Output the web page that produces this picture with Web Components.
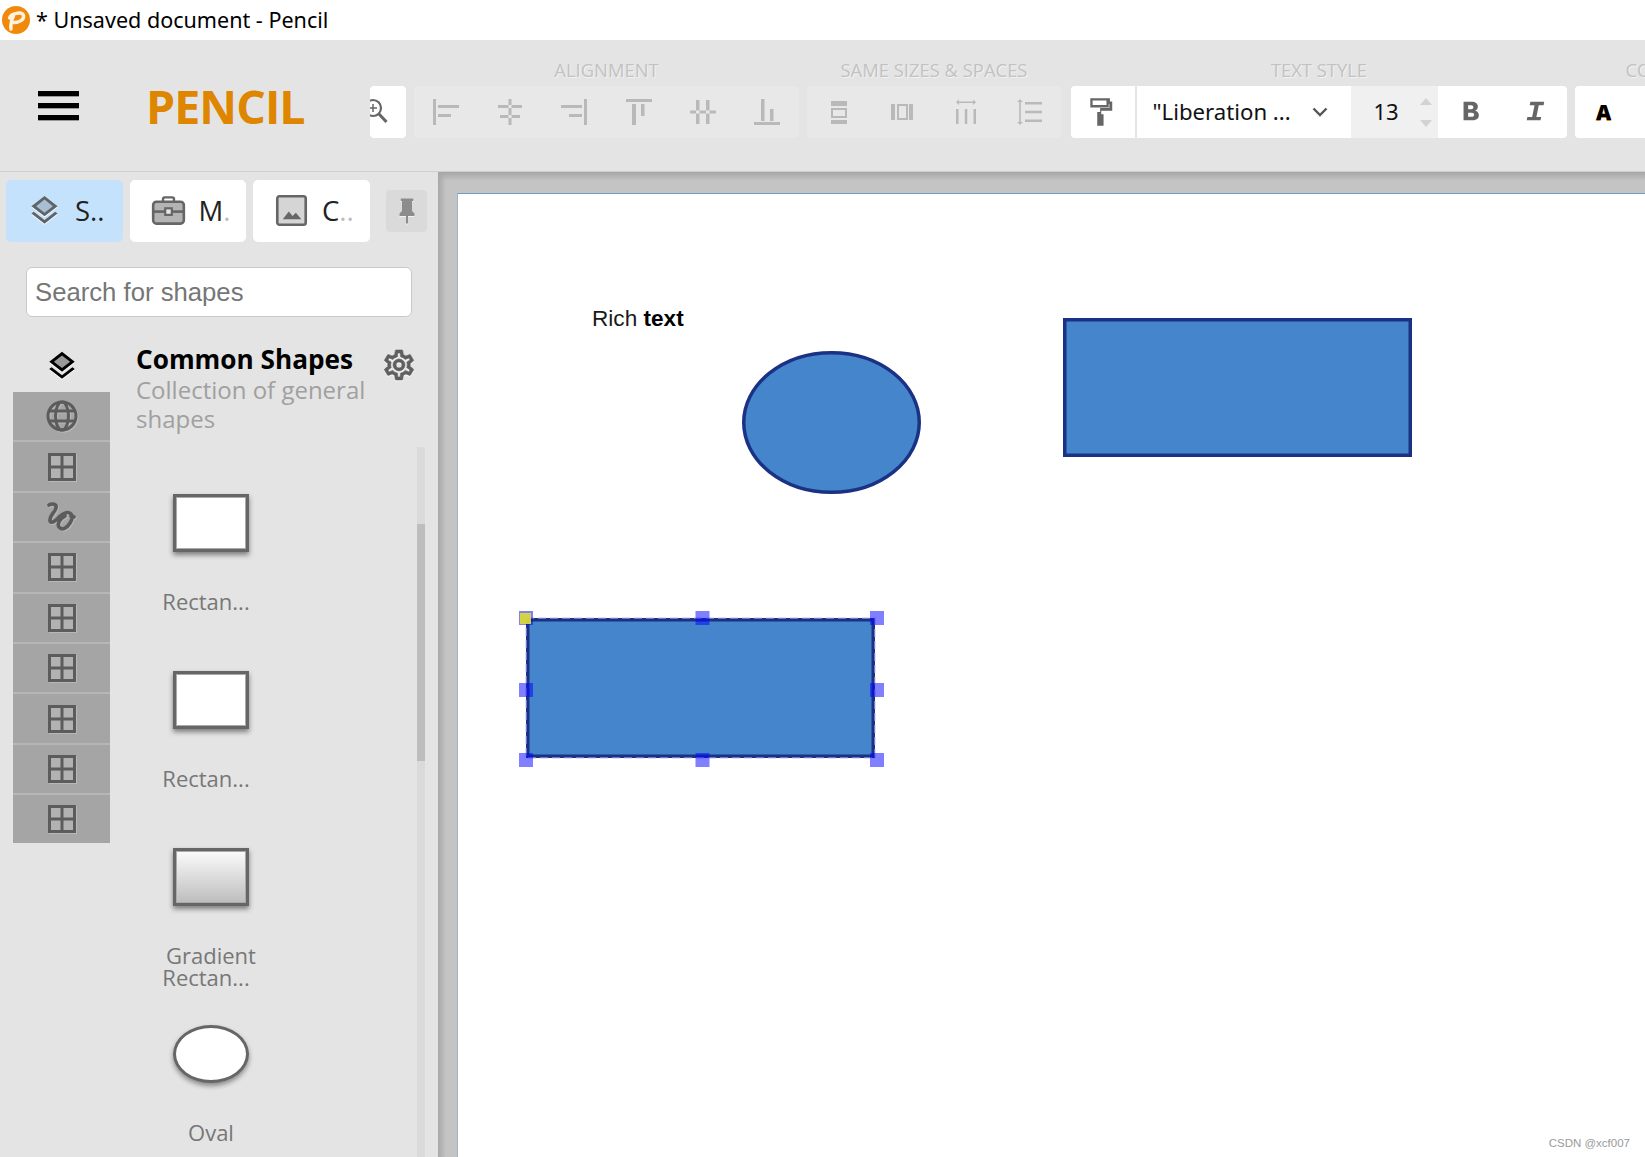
<!DOCTYPE html>
<html>
<head>
<meta charset="utf-8">
<title>Pencil</title>
<style>
    html,body{margin:0;padding:0;height:100%;overflow:hidden;background:#e4e4e4}
    body{font-family:"Open Sans","Noto Sans",sans-serif}
</style>
</head>
<body>
<pencil-app></pencil-app>

<script>
const ICONS = {
    alignLeft: 'M0 0h3v26H0zM5 6h21v3H5zM5 15h13v3H5z',
    alignCenter: 'M11.5 0h3v26h-3zM1 6h24v3H1zM3 16h20v3H3z',
    alignRight: 'M23 0h3v26h-3zM0 6h21v3H0zM8 15h13v3H8z',
    alignTop: 'M0 0h26v3H0zM6 5h4v21H6zM15 5h3.5v12H15z',
    alignMiddle: 'M0 11.5h26v3H0zM6 1h3.5v24H6zM16 1h3.5v24H16z',
    alignBottom: 'M0 23h26v3H0zM7 0h3.5v22H7zM16 10h3.5v12H16z',
    sameHeight: 'M5 2h16v5H5zM5 9h16v10H5zM7 11v6h12v-6zM5 21h16v4H5z',
    sameWidth: 'M2 5h4v16H2zM8 5h11v16H8zM10 7v12h7V7zM20 5h4v16h-4z',
    spaceH: 'M3 3.2 6 .5v2h14v-2l3 2.7-3 2.8v-2H6v2zM3 10h2.5v15H3zM11.8 10h2.5v15h-2.5zM20.5 10H23v15h-2.5z',
    spaceV: 'M4 0l2.8 3h-2v20h2L4 26l-2.800-3h2V3h-2zM9 3h17v2.5H9zM9 11.800h17v2.5H9zM9 20.500h17V23H9z',
    roller: 'M2 1h17v3h2v8h-9.5v3h2v10H8V13h2.5V9.5H18.5V6H18v3H2zM4 3v4h12V3z',
    bold: 'M6 2h9c3.800 0 6.500 1.800 6.500 5.300 0 2.100-1.100 3.600-2.900 4.300 2.500.6 4 2.400 4 5 0 3.900-3 5.400-7 5.400H6zM11 5.800v4.200h3.400c1.400 0 2.200-.8 2.200-2.100s-.8-2.100-2.200-2.100zM11 13.800v4.400h3.900c1.600 0 2.600-.8 2.600-2.200s-1-2.200-2.600-2.200z',
    italic: 'M8 2h15l-.7 3.700h-5.200L14.500 18.300h5.200L19 22H4l.7-3.700h5.200L12.500 5.700H7.300z'
}
const LAYERS = `<svg viewBox="0 0 24 24" width="100%" height="100%"><path d="M12 3.500 5 9l7 5.500L19 9z" fill="VAR"/><path fill="STROKE" d="M12,18.540L19.370,12.800L21,14.070L12,21.070L3,14.070L4.620,12.810L12,18.540M12,16L3,9L12,2L21,9L12,16M12,4.530L6.260,9L12,13.470L17.740,9L12,4.530Z"/></svg>`

class BaseElement extends HTMLElement{
    constructor(){
        super()
        this.attachShadow({mode: 'open'})
    }
    connectedCallback(){
        this.shadowRoot.innerHTML = `<style>${this.getStyles()}</style>${this.getTemplate()}`
    }
    getStyles(){ return '' }
    getTemplate(){ return '<slot></slot>' }
}

class TitleBar extends BaseElement{
    getStyles(){
        return `
            :host{display:flex;align-items:center;height:40px;background:#fff;padding-left:2px;box-sizing:border-box}
            svg{width:28px;height:28px;margin-right:6px;flex:none}
            span{font:21.55px/40px "Noto Sans",sans-serif;color:#000;white-space:nowrap}
        `
    }
    getTemplate(){
        return `
            <svg viewBox="0 0 28 28">
                <circle cx="14" cy="14" r="14" fill="#f08a0c"/>
                <path d="M9 23c-.5-4 .5-9 2.5-13M7.500 12C9 7.500 20 5 21.500 9.500 22.500 14 16 17 11 16.500" fill="none" stroke="#fff3e0" stroke-width="3.4" stroke-linecap="round"/>
            </svg>
            <span>* Unsaved document - Pencil</span>
        `
    }
}

class ToolGroup extends BaseElement{
    getStyles(){
        return `
            :host{display:flex;flex-direction:column;flex:none;padding-top:20px;box-sizing:border-box}
            .label{height:20px;line-height:20px;margin-bottom:6px;text-align:center;white-space:nowrap;
                font-size:18.4px;color:#c2c2c2;text-shadow:1px 1px 0 #f2f2f2}
            .box{display:flex;align-items:center;height:52px;border-radius:4px;background:var(--box-bg,#fff);overflow:hidden}
        `
    }
    getTemplate(){
        return `
            <div class="label">${this.getAttribute('label') || ''}</div>
            <div class="box"><slot></slot></div>
        `
    }
}

class ToolButton extends BaseElement{
    getStyles(){
        const size = this.getAttribute('size') || 26
        return `
            :host{display:flex;align-items:center;justify-content:center;height:100%;flex:1 1 0;color:var(--icon,#b9b9b9)}
            svg{width:${size}px;height:${size}px;fill:currentColor;fill-rule:evenodd;display:block}
        `
    }
    getTemplate(){
        return `<svg viewBox="0 0 26 26"><path d="${ICONS[this.getAttribute('icon')]}"/></svg>`
    }
}

class FontPicker extends BaseElement{
    getStyles(){
        return `
            :host{display:flex;height:100%;width:303px;flex:none;font-family:"Noto Sans",sans-serif;color:#111}
            .name{width:216px;box-sizing:border-box;padding:0 0 2px 16px;display:flex;align-items:center;font-size:22.2px;white-space:nowrap;border-left:2px solid #e4e4e4}
            .name svg{margin-left:21px;flex:none;margin-top:2px}
            .size{width:87px;background:#f0f0f0;display:flex;align-items:center;padding:0 0 2px 23px;box-sizing:border-box;font:22px "Noto Sans",sans-serif;gap:21px}
            .arrows{display:flex;flex-direction:column;gap:15px;margin-top:2px}
            .arrows i{display:block;width:0;height:0;border:6px solid transparent;border-top:0;border-bottom:7px solid #d2d2d2}
            .arrows i + i{transform:rotate(180deg)}
        `
    }
    getTemplate(){
        return `
            <div class="name">
                <span>"Liberation ...</span>
                <svg width="16" height="10" viewBox="0 0 16 10"><path d="M1.500 1.500 8 8l6.500-6.500" fill="none" stroke="#555" stroke-width="2.400"/></svg>
            </div>
            <div class="size"><span>13</span><div class="arrows"><i></i><i></i></div></div>
        `
    }
}

class AppToolbar extends BaseElement{
    getStyles(){
        return `
            :host{display:flex;height:132px;box-sizing:border-box;background:#e4e4e4;border-bottom:1px solid #cfcfcf;padding-left:38px;overflow:hidden}
            .burger{display:flex;flex-direction:column;gap:7px;width:41px;margin-top:51px;flex:none}
            .burger i{display:block;height:5px;background:#000;box-shadow:0 1px 0 #999}
            .logo{margin-left:67px;width:224px;flex:none;font:700 46.5px/1 "Open Sans",sans-serif;color:#de8600;letter-spacing:-.95px;padding-top:43px;box-sizing:border-box}
            .zoom{width:36px;margin-right:8px}
            .zoom svg{display:block;width:36px;height:52px}
            .a{width:385px;margin-right:8px;--box-bg:#e8e8e8}
            .b{width:254px;margin-right:10px;--box-bg:#e8e8e8}
            .c{width:496px;margin-right:8px;--icon:#666}
            .d{width:162px;--icon:#000}
            .wide{flex:0 0 63.5px}
        `
    }
    getTemplate(){
        const group = list => list.map(n => `<tool-button icon="${n}"></tool-button>`).join('')
        return `
            <div class="burger"><i></i><i></i><i></i></div>
            <div class="logo">PENCIL</div>
            <tool-group class="zoom">
                <svg viewBox="0 0 36 52">
                    <circle cx="3" cy="22" r="8" fill="none" stroke="#666" stroke-width="2.2"/>
                    <path d="M-1 22h8M3 18v8" stroke="#666" stroke-width="1.5"/>
                    <path d="M9 28l7.500 8" stroke="#666" stroke-width="3"/>
                </svg>
            </tool-group>
            <tool-group class="a" label="ALIGNMENT">${group(['alignLeft','alignCenter','alignRight','alignTop','alignMiddle','alignBottom'])}</tool-group>
            <tool-group class="b" label="SAME SIZES &amp; SPACES">${group(['sameHeight','sameWidth','spaceH','spaceV'])}</tool-group>
            <tool-group class="c" label="TEXT STYLE">
                <tool-button class="wide" icon="roller" size="30"></tool-button>
                <font-picker></font-picker>
                <tool-button icon="bold" size="24"></tool-button>
                <tool-button icon="italic" size="24"></tool-button>
            </tool-group>
            <tool-group class="d" label="COLOR">
                <side-letter>A</side-letter>
            </tool-group>
        `
    }
}

class SideLetter extends BaseElement{
    getStyles(){
        return `
            :host{display:block;padding-left:21px;font:800 21px "Open Sans",sans-serif;color:#000;text-shadow:0 1px 0 #d98b2b}
        `
    }
}

class SideTab extends BaseElement{
    getStyles(){
        return `
            :host{display:flex;align-items:center;width:116.5px;height:62px;border-radius:5px;background:#fff;box-sizing:border-box;flex:none;
                font:27.5px "Open Sans",sans-serif;color:#222}
            :host([active]){background:#c5e2fd}
            .ic{width:35px;height:35px;margin:0 13px 0 21px;flex:none;filter:drop-shadow(0 1px 0 #fff)}
            .fade{color:#bbb}
        `
    }
    getTemplate(){
        const kind = this.getAttribute('icon')
        const icon = kind === 'layers' ? LAYERS.replace('VAR','#a9bed2').replace('STROKE','#5f6468')
            : kind === 'case' ? `<svg viewBox="0 0 32 32" width="100%" height="100%"><path d="M11 8V5.500C11 4.700 11.700 4 12.500 4h7c.8 0 1.500.7 1.500 1.500V8" fill="none" stroke="#666" stroke-width="2.2"/><rect x="2" y="8" width="28" height="20" rx="3" fill="#b4b4b4" stroke="#666" stroke-width="2.4"/><path d="M2 17h28" stroke="#666" stroke-width="2.4"/><rect x="13" y="14" width="6" height="6" fill="#e8e8e8" stroke="#666" stroke-width="2"/></svg>`
            : `<svg viewBox="0 0 32 32" width="100%" height="100%"><rect x="3" y="3" width="26" height="26" rx="2" fill="#d5d5d5" stroke="#666" stroke-width="2.4"/><path d="M8 24l5.500-7 3.500 4 3-3 5 6z" fill="#666"/></svg>`
        return `<div class="ic">${icon}</div><span>${this.getAttribute('text')}<span class="fade">${this.getAttribute('tail') || ''}</span></span>`
    }
}

class SideTabs extends BaseElement{
    getStyles(){
        return `
            :host{display:flex;gap:7px;padding:7.5px 0 0 6px}
            .pin{width:41px;height:42px;margin:10px 0 0 9.5px;border-radius:4px;background:#dadada;display:flex;align-items:center;justify-content:center}
            .pin svg{width:30px;height:30px;fill:#8c8c8c;filter:drop-shadow(0 1px 0 #f2f2f2)}
        `
    }
    getTemplate(){
        return `
            <side-tab active icon="layers" text="S.."></side-tab>
            <side-tab icon="case" text="M" tail="."></side-tab>
            <side-tab icon="image" text="C" tail=".."></side-tab>
            <div class="pin"><svg viewBox="0 0 24 24"><path d="M16,12V4H17V2H7V4H8V12L6,14V16H11.2V22H12.8V16H18V14L16,12Z"/></svg></div>
        `
    }
}

class ShapeSearch extends BaseElement{
    getStyles(){
        return `
            :host{display:block;margin:25.5px 0 23px 26px;width:386px;height:50px;box-sizing:border-box;background:#fff;border:1px solid #c9c9c9;border-radius:6px;
                font:25.7px/48px "Liberation Sans",sans-serif;color:#767676;padding-left:8px}
        `
    }
    getTemplate(){ return 'Search for shapes' }
}

class RailItem extends BaseElement{
    getStyles(){
        return `
            :host{display:flex;align-items:center;justify-content:center;height:50.4px;box-sizing:border-box;background:#a5a5a5;border-bottom:2px solid #b6b6b6}
            :host([plain]){background:none;border:0;height:52px}
            :host(:last-child){border-bottom:0;height:48.3px}
            svg{display:block;filter:drop-shadow(1px 1px 0 #b8b8b8)}
            :host([plain]) svg{filter:drop-shadow(0 1px 0 #fff)}
        `
    }
    getTemplate(){
        const kind = this.getAttribute('icon')
        if(kind === 'layers'){
            return `<svg width="34" height="34" viewBox="0 0 24 24">${LAYERS.replace('VAR','#999').replace('STROKE','#000').replace(/<svg[^>]*>|<\/svg>/g,'')}</svg>`
        }
        if(kind === 'globe'){
            return `<svg width="32" height="32" viewBox="0 0 32 32" fill="none" stroke="#5c5c5c" stroke-width="3">
                <circle cx="16" cy="16" r="14"/><ellipse cx="16" cy="16" rx="6.5" ry="14"/><path d="M3.5 11h25M3.500 21h25"/></svg>`
        }
        if(kind === 'squiggle'){
            return `<svg width="30" height="30" viewBox="0 0 30 30" fill="none" stroke="#5c5c5c" stroke-width="3.6" stroke-linecap="round" stroke-linejoin="round">
                <path d="M2 3C5 1 10 2 9 6 8 11 2 13 3 19c1 3 6 0 9-4 4-4 9-6 12-3 2 2 1 6-1 9-3 5-8 8-11 4-2-3 1-9 6-11M24 14l3 1"/></svg>`
        }
        return `<svg width="28" height="28" viewBox="0 0 28 28"><rect x="1.5" y="1.5" width="25" height="25" fill="#b2b2b2" stroke="#5c5c5c" stroke-width="3"/><path d="M14 1v26M1 14h26" stroke="#5c5c5c" stroke-width="3"/></svg>`
    }
}

class CollectionRail extends BaseElement{
    getStyles(){
        return `:host{display:block;width:97px;margin-left:13px;flex:none}`
    }
    getTemplate(){
        const rows = ['globe','grid','squiggle','grid','grid','grid','grid','grid','grid']
        return `<rail-item plain icon="layers"></rail-item>` + rows.map(r => `<rail-item icon="${r}"></rail-item>`).join('')
    }
}

class ShapeItem extends BaseElement{
    getStyles(){
        return `
            :host{display:flex;flex-direction:column;align-items:center;height:177px;width:148px;box-sizing:border-box;
                font:22px/22px "Open Sans",sans-serif;color:#777}
            .shape{width:76px;height:58px;box-sizing:border-box;border:3px solid #666;background:#fff;box-shadow:0 3px 5px rgba(0,0,0,.45),inset 0 0 0 1px #aaa;flex:none}
            .grad{background:linear-gradient(#fbfbfb,#bdbdbd)}
            .oval{border-radius:50%;filter:blur(.6px);box-shadow:0 3px 5px rgba(0,0,0,.4)}
            .label{margin-top:38px;text-align:center;white-space:nowrap}
            .cut{position:relative;left:-5px;display:block}
        `
    }
    getTemplate(){
        const kind = this.getAttribute('kind') || ''
        const lines = this.getAttribute('label').split('|')
        const text = lines.map(t => t.endsWith('...') ? `<span class="cut">${t}</span>` : `<span style="display:block">${t}</span>`).join('')
        return `<div class="shape ${kind}"></div><div class="label">${text}</div>`
    }
}

class ShapeList extends BaseElement{
    getStyles(){
        return `
            :host{display:flex;flex:1;min-height:0;margin-top:12px}
            .list{width:280px;padding:47px 0 0 1px;box-sizing:content-box;flex:none}
            .track{width:8px;background:#dadada;flex:none;padding-top:77px;height:720px;box-sizing:border-box}
            .thumb{height:237px;background:#bdbdbd}
        `
    }
    getTemplate(){
        return `
            <div class="list">
                <shape-item label="Rectan..."></shape-item>
                <shape-item label="Rectan..."></shape-item>
                <shape-item kind="grad" label="Gradient|Rectan..."></shape-item>
                <shape-item kind="oval" label="Oval"></shape-item>
            </div>
            <div class="track"><div class="thumb"></div></div>
        `
    }
}

class CollectionPane extends BaseElement{
    getStyles(){
        return `
            :host{display:flex;flex-direction:column;margin-left:26px;flex:1;min-width:0}
            .head{display:flex;height:95px}
            .txt{width:245px;flex:none}
            h2{margin:0;padding-top:3px;height:32px;font:700 26.2px/32px "Open Sans",sans-serif;color:#000;white-space:nowrap}
            p{margin:0;font:24px/29px "Open Sans",sans-serif;color:#a0a0a0}
            svg{width:36px;height:36px;margin-top:7px;flex:none;fill:#5f5f5f;stroke:#5f5f5f;stroke-width:.4;filter:drop-shadow(0 1px 0 #fff)}
        `
    }
    getTemplate(){
        return `
            <div class="head">
                <div class="txt">
                    <h2>Common Shapes</h2>
                    <p>Collection of general shapes</p>
                </div>
                <svg viewBox="0 0 24 24"><path d="M12,8A4,4 0 0,1 16,12A4,4 0 0,1 12,16A4,4 0 0,1 8,12A4,4 0 0,1 12,8M12,10A2,2 0 0,0 10,12A2,2 0 0,0 12,14A2,2 0 0,0 14,12A2,2 0 0,0 12,10M10,22C9.75,22 9.54,21.82 9.5,21.58L9.13,18.93C8.5,18.68 7.96,18.34 7.44,17.94L4.95,18.95C4.73,19.03 4.46,18.95 4.34,18.73L2.34,15.27C2.21,15.05 2.27,14.78 2.46,14.63L4.57,12.97L4.5,12L4.57,11L2.46,9.37C2.27,9.22 2.21,8.95 2.34,8.73L4.34,5.27C4.46,5.05 4.73,4.96 4.95,5.05L7.44,6.05C7.96,5.66 8.5,5.32 9.13,5.07L9.5,2.42C9.54,2.18 9.75,2 10,2H14C14.25,2 14.46,2.18 14.5,2.42L14.87,5.07C15.5,5.32 16.04,5.66 16.56,6.05L19.05,5.05C19.27,4.96 19.54,5.05 19.66,5.27L21.66,8.73C21.79,8.95 21.73,9.22 21.54,9.37L19.43,11L19.5,12L19.43,13L21.54,14.63C21.73,14.78 21.79,15.05 21.66,15.27L19.66,18.73C19.54,18.95 19.27,19.04 19.05,18.95L16.56,17.95C16.04,18.34 15.5,18.68 14.87,18.93L14.5,21.58C14.46,21.82 14.25,22 14,22H10M11.25,4L10.88,6.61C9.68,6.86 8.62,7.5 7.85,8.39L5.44,7.35L4.69,8.65L6.8,10.2C6.4,11.37 6.4,12.64 6.8,13.8L4.68,15.36L5.43,16.66L7.86,15.62C8.63,16.5 9.68,17.14 10.87,17.38L11.24,20H12.76L13.13,17.39C14.32,17.14 15.37,16.5 16.14,15.62L18.57,16.66L19.32,15.36L17.2,13.81C17.6,12.64 17.6,11.37 17.2,10.2L19.31,8.65L18.56,7.35L16.15,8.39C15.38,7.5 14.32,6.86 13.12,6.62L12.75,4H11.25Z"/></svg>
            </div>
            <shape-list></shape-list>
        `
    }
}

class AppSidebar extends BaseElement{
    getStyles(){
        return `
            :host{display:flex;flex-direction:column;width:438px;flex:none;background:#e4e4e4;overflow:hidden}
            .panel{display:flex;flex:1;min-height:0}
        `
    }
    getTemplate(){
        return `
            <side-tabs></side-tabs>
            <shape-search></shape-search>
            <div class="panel">
                <collection-rail></collection-rail>
                <collection-pane></collection-pane>
            </div>
        `
    }
}

// shapes on the drawing, x/y are free canvas coordinates
class DocShape extends BaseElement{
    getStyles(){
        const [x,y,w,h] = ['x','y','w','h'].map(a => this.getAttribute(a))
        return `
            :host{position:absolute;left:${x}px;top:${y}px;width:${w}px;height:${h}px}
            svg{display:block;overflow:visible}
        `
    }
    getTemplate(){
        const w = +this.getAttribute('w'), h = +this.getAttribute('h')
        const body = this.getAttribute('kind') === 'ellipse'
            ? `<ellipse cx="${w/2}" cy="${h/2}" rx="${w/2-1.75}" ry="${h/2-1.75}" fill="#4485cc" stroke="#1b3284" stroke-width="3.5"/>`
            : `<rect x="1.75" y="1.75" width="${w-3.5}" height="${h-3.5}" fill="#4485cc" stroke="#1b3284" stroke-width="3.5"/>`
        if(!this.hasAttribute('selected')){
            return `<svg width="${w}" height="${h}">${body}</svg>`
        }
        const hs = [[0,0],[w/2,0],[w,0],[0,h/2],[w,h/2],[0,h],[w/2,h],[w,h]]
        const handles = hs.map(([a,b]) => {
            const hx = a === w ? w-5 : a === 0 ? -7 : a-5
            const hy = b === h ? h-5 : b === 0 ? -7 : b-5
            return `<rect x="${hx}" y="${hy}" width="14" height="14" fill="rgba(0,0,255,.5)"/>`
        }).join('')
        return `<svg width="${w}" height="${h}">${body}
            <rect x="0" y="0" width="${w}" height="${h}" fill="none" stroke="rgba(190,190,255,.7)" stroke-width="1.5" stroke-dasharray="8 4"/>
            ${handles}
            <rect x="-6" y="-5" width="11" height="11" fill="#d8d83c" opacity=".95"/>
        </svg>`
    }
}

class RichText extends BaseElement{
    getStyles(){
        return `
            :host{position:absolute;left:134px;top:111px;font:22.6px/28px "Liberation Sans",sans-serif;color:#1a1a1a;white-space:nowrap}
            b{color:#000}
        `
    }
    getTemplate(){ return 'Rich <b>text</b>' }
}

class DocCanvas extends BaseElement{
    getStyles(){
        return `
            :host{display:block;position:relative;flex:1;background:#fff;border-top:1px solid #6f9cc6;border-left:1px solid #9fb3c6;overflow:hidden}
            .mark{position:absolute;right:15px;bottom:8px;font:11.5px "Liberation Sans",sans-serif;color:#9a9a9a}
        `
    }
    getTemplate(){
        return `
            <rich-text></rich-text>
            <doc-shape kind="ellipse" x="284" y="157" w="179" h="143"></doc-shape>
            <doc-shape x="605" y="124" w="349" h="139"></doc-shape>
            <doc-shape selected x="68" y="424" w="349" h="140"></doc-shape>
            <div class="mark">CSDN @xcf007</div>
        `
    }
}

class AppWorkspace extends BaseElement{
    getStyles(){
        return `
            :host{display:flex;flex:1;min-width:0;padding:21px 0 0 19px;
                background:linear-gradient(90deg,#a8a8a8 0,rgba(196,196,196,0) 8px),linear-gradient(#a6a6a6 0,#c4c4c4 9px)}
        `
    }
}

class PencilApp extends BaseElement{
    getStyles(){
        return `
            :host{display:flex;flex-direction:column;width:1645px;height:1157px;overflow:hidden}
            .main{display:flex;flex:1;min-height:0}
        `
    }
    getTemplate(){
        return `
            <title-bar></title-bar>
            <app-toolbar></app-toolbar>
            <div class="main">
                <app-sidebar></app-sidebar>
                <app-workspace><doc-canvas></doc-canvas></app-workspace>
            </div>
        `
    }
}

customElements.define('title-bar', TitleBar)
customElements.define('tool-group', ToolGroup)
customElements.define('tool-button', ToolButton)
customElements.define('font-picker', FontPicker)
customElements.define('side-letter', SideLetter)
customElements.define('app-toolbar', AppToolbar)
customElements.define('side-tab', SideTab)
customElements.define('side-tabs', SideTabs)
customElements.define('shape-search', ShapeSearch)
customElements.define('rail-item', RailItem)
customElements.define('collection-rail', CollectionRail)
customElements.define('shape-item', ShapeItem)
customElements.define('shape-list', ShapeList)
customElements.define('collection-pane', CollectionPane)
customElements.define('app-sidebar', AppSidebar)
customElements.define('doc-shape', DocShape)
customElements.define('rich-text', RichText)
customElements.define('doc-canvas', DocCanvas)
customElements.define('app-workspace', AppWorkspace)
customElements.define('pencil-app', PencilApp)
</script>
</body>
</html>
